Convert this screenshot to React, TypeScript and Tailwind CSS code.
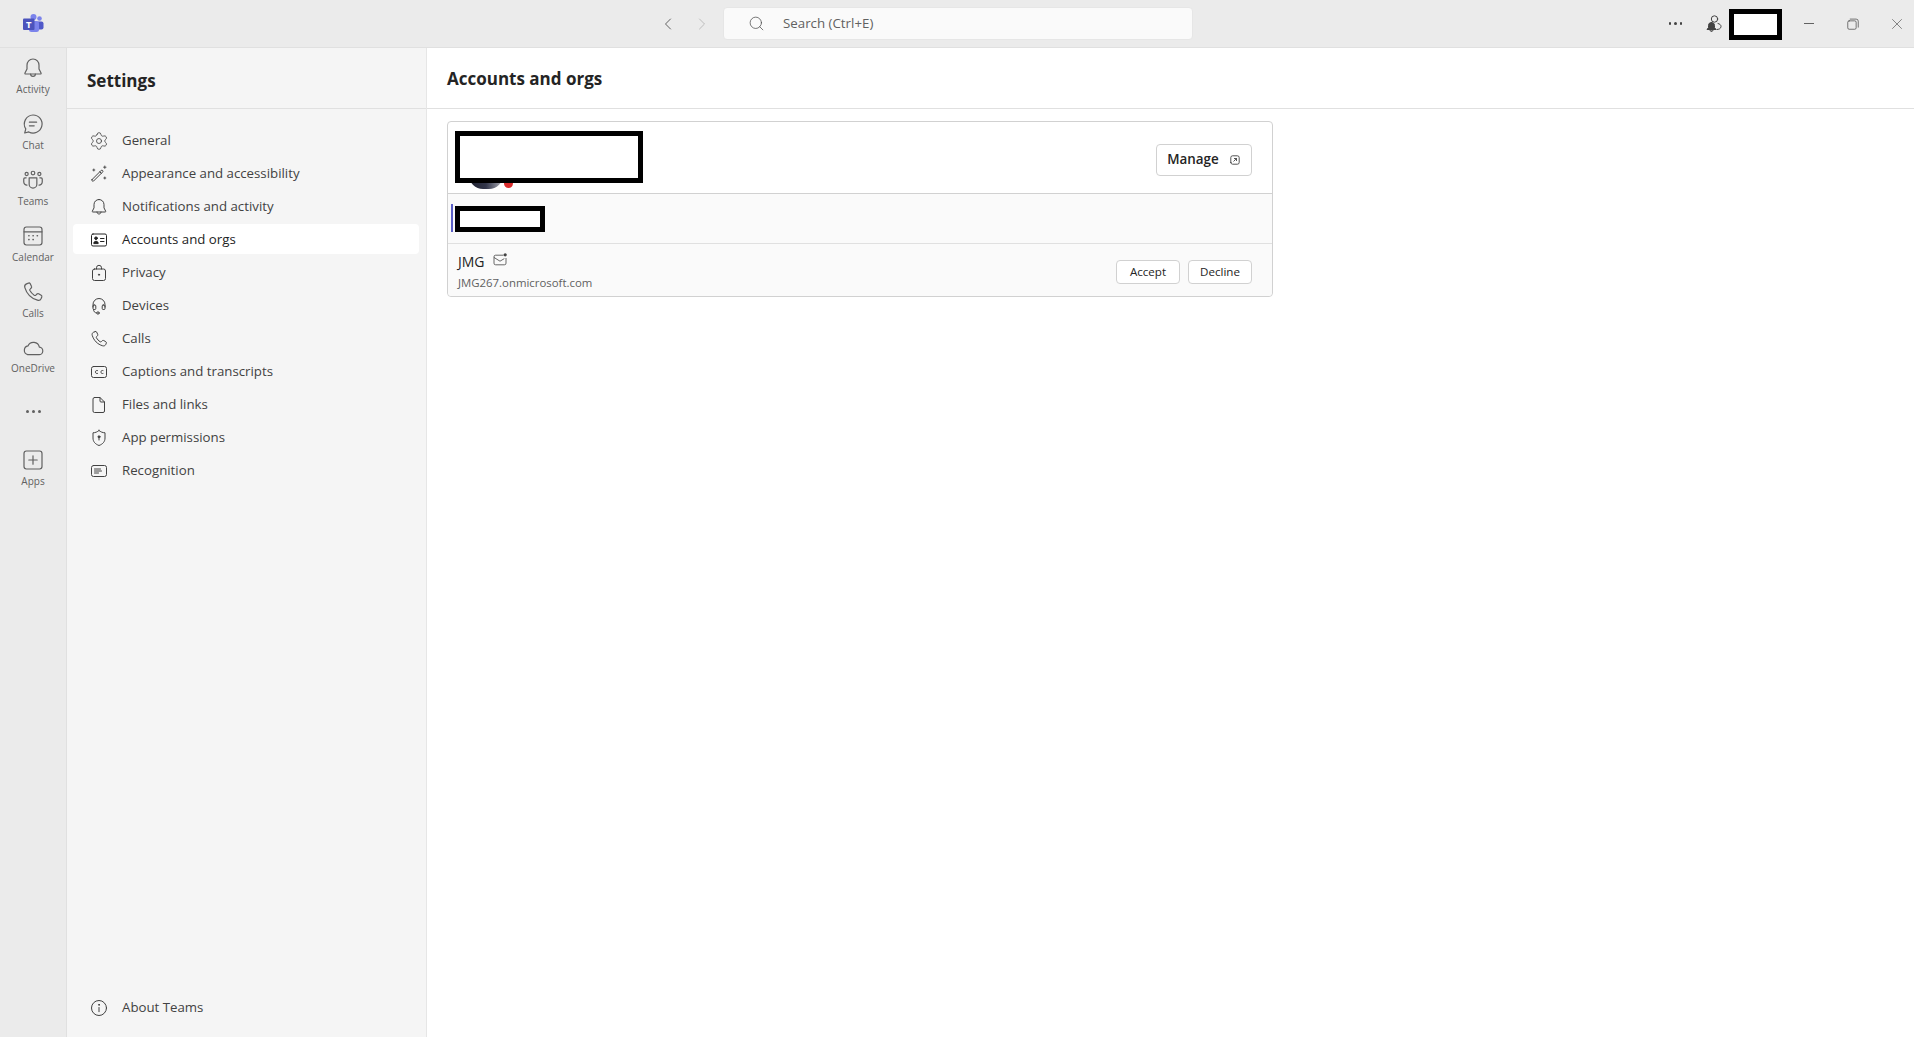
import type { ReactNode } from 'react';
import { ChevronLeft, ChevronRight, Search, Settings, X } from 'lucide-react';

const font = "font-['Open_Sans','Noto_Sans',sans-serif]";

function Ico({ size = 20, children, className = '' }: { size?: number; children: ReactNode; className?: string }) {
  return (
    <svg width={size} height={size} viewBox="0 0 20 20" fill="none" stroke="currentColor" strokeWidth="1" strokeLinecap="round" strokeLinejoin="round" className={className}>
      {children}
    </svg>
  );
}

const BellPath = (
  <>
    <path d="M10 2.500c-3 0-5 2.300-5 5.200v3.200L3.300 14.200c-.2.400 0 .8.500.8h12.400c.5 0 .7-.4.500-.8L15 10.900V7.700c0-2.900-2-5.200-5-5.200Z" />
    <path d="M8 15c0 1.200.9 2 2 2s2-.8 2-2" />
  </>
);
const PhonePath = <path d="M6.200 2.600 4.600 3.200C3.400 3.700 2.800 5 3.200 6.300c1.600 5.200 5.300 9 10.500 10.500 1.300.4 2.600-.2 3.100-1.400l.5-1.300c.2-.6 0-1.100-.5-1.400l-2.100-1.200c-.5-.3-1-.2-1.400.2l-.9.9c-.4.4-.9.4-1.400.1-1.500-1-2.700-2.300-3.600-3.900-.2-.4-.2-.9.2-1.200l.9-.9c.4-.4.500-.9.2-1.400L7.600 3c-.3-.5-.9-.7-1.400-.4Z" />;

const railItems: { label: string; icon: ReactNode; h: string; gap: string }[] = [
  { label: 'Activity', icon: <Ico size={24}>{BellPath}</Ico>, h: 'h-14', gap: 'mt-[2px]' },
  {
    label: 'Chat',
    icon: (
      <Ico size={24}>
        <path d="M10 2.500a7.500 7.500 0 1 1-3.500 14.100l-3.400.9.9-3.400A7.500 7.500 0 0 1 10 2.500Z" />
        <path d="M7 8.500h6M7 11.500h4" />
      </Ico>
    ),
    h: 'h-14',
    gap: 'mt-[2px]',
  },
  {
    label: 'Teams',
    icon: (
      <Ico size={24}>
        <circle cx="10" cy="4.200" r="1.500" />
        <circle cx="4.700" cy="5" r="1.300" />
        <circle cx="15.300" cy="5" r="1.300" />
        <path d="M6.800 8.200h6.400v5.300a3.200 3.200 0 0 1-6.400 0V8.200Z" />
        <path d="M4.300 8.200H3.200a.9.9 0 0 0-.9.9v2.600a2.600 2.600 0 0 0 2.700 2.500M15.700 8.200h1.100c.5 0 .9.400.9.900v2.600a2.600 2.600 0 0 1-2.700 2.500" />
      </Ico>
    ),
    h: 'h-14',
    gap: 'mt-[2px]',
  },
  {
    label: 'Calendar',
    icon: (
      <Ico size={24}>
        <rect x="2.500" y="2.500" width="15" height="15" rx="2" />
        <path d="M2.500 6.500h15" />
        <path d="M6.500 9.800h.2M10 9.800h.2M13.500 9.800h.2M6.500 13h.2M10 13h.2" strokeWidth="1.300" />
      </Ico>
    ),
    h: 'h-14',
    gap: 'mt-[2px]',
  },
  { label: 'Calls', icon: <Ico size={24}>{PhonePath}</Ico>, h: 'h-14', gap: 'mt-[2px]' },
  {
    label: 'OneDrive',
    icon: (
      <Ico size={24}>
        <path d="M5.500 15.500h9.300a3.100 3.100 0 0 0 .5-6.200 5 5 0 0 0-9.500-1A3.700 3.700 0 0 0 5.500 15.500Z" />
      </Ico>
    ),
    h: 'h-[52px]',
    gap: 'mt-[1px]',
  },
];

const navItems: { label: string; icon: ReactNode }[] = [
  { label: 'General', icon: <Settings size={20} strokeWidth={1} /> },
  {
    label: 'Appearance and accessibility',
    icon: (
      <Ico>
        <path d="M3 15.600 12.300 6.300a1.100 1.100 0 0 1 1.500 1.500L4.500 17.100a1.100 1.100 0 0 1-1.500-1.500ZM10.800 7.800l1.500 1.500" />
        <path d="M15.800 2v2.400M14.600 3.200H17M4.800 5v2M3.800 6h2M15.800 13v2M14.800 14h2" strokeWidth="0.9" />
      </Ico>
    ),
  },
  { label: 'Notifications and activity', icon: <Ico>{BellPath}</Ico> },
  {
    label: 'Accounts and orgs',
    icon: (
      <Ico>
        <rect x="2.500" y="4" width="15" height="12" rx="1.500" />
        <circle cx="7" cy="8.200" r="1.300" fill="currentColor" />
        <path d="M4.800 13.200c0-1.200.9-1.900 2.200-1.900s2.200.7 2.200 1.900Z" fill="currentColor" />
        <path d="M11.500 8.500h3.500M11.500 11.500h3.500" />
      </Ico>
    ),
  },
  {
    label: 'Privacy',
    icon: (
      <Ico>
        <rect x="3.500" y="6" width="13" height="11.500" rx="2" />
        <path d="M7.500 6V4.800a2.500 2.500 0 0 1 5 0V6" />
        <circle cx="10" cy="11.700" r="0.600" fill="currentColor" />
      </Ico>
    ),
  },
  {
    label: 'Devices',
    icon: (
      <Ico>
        <path d="M4 11V8.500a6 6 0 0 1 12 0V11" />
        <rect x="4" y="9" width="2.800" height="4.500" rx="1" />
        <rect x="13.200" y="9" width="2.800" height="4.500" rx="1" />
        <path d="M4.500 13.500c0 2 1.200 3.300 3.200 3.500" />
        <circle cx="9" cy="17" r="1.200" />
      </Ico>
    ),
  },
  { label: 'Calls', icon: <Ico>{PhonePath}</Ico> },
  {
    label: 'Captions and transcripts',
    icon: (
      <Ico>
        <rect x="2.500" y="4.500" width="15" height="11" rx="2" />
        <path d="M8.500 8.500a1.600 1.600 0 1 0 0 3M14 8.500a1.600 1.600 0 1 0 0 3" />
      </Ico>
    ),
  },
  {
    label: 'Files and links',
    icon: (
      <Ico>
        <path d="M5.500 2.500h5.500L15.500 7v9a1.500 1.500 0 0 1-1.500 1.500H5.500A1.500 1.500 0 0 1 4 16V4a1.500 1.500 0 0 1 1.500-1.500Z" />
        <path d="M11 2.500V6a1 1 0 0 0 1 1h3.500" />
      </Ico>
    ),
  },
  {
    label: 'App permissions',
    icon: (
      <Ico>
        <path d="M10 2.500c1.700 1.500 3.700 2.200 6 2.300V10c0 3.500-2 6-6 7.500C6 16 4 13.500 4 10V4.800c2.300-.1 4.300-.8 6-2.300Z" />
        <circle cx="10" cy="8.800" r="1" fill="currentColor" />
        <path d="M10 9.500v2.500" />
      </Ico>
    ),
  },
  {
    label: 'Recognition',
    icon: (
      <Ico>
        <rect x="2.500" y="4.500" width="15" height="11" rx="2" />
        <path d="M5.500 8h6M5.500 10h7M5.500 12h4" />
      </Ico>
    ),
  },
];

function TeamsLogo() {
  return (
    <svg width="24" height="24" viewBox="0 0 24 24">
      <circle cx="18.500" cy="6.500" r="2.300" fill="#7b83eb" />
      <rect x="15" y="9.500" width="7.500" height="8" rx="2" fill="#5059c9" />
      <circle cx="12.500" cy="5" r="3" fill="#7b83eb" />
      <rect x="8" y="9" width="10" height="11" rx="2.500" fill="#7b83eb" />
      <rect x="2" y="6.500" width="11.500" height="11.500" rx="1" fill="#4b53bc" />
      <text x="7.700" y="15.800" textAnchor="middle" fontSize="9.500" fontWeight="700" fill="#fff" fontFamily="Open Sans">T</text>
    </svg>
  );
}

function Redact({ className }: { className: string }) {
  return <div className={`absolute bg-white border-black ${className}`} />;
}

function TitleBar() {
  return (
    <header className="relative flex h-12 shrink-0 items-center border-b border-[#e0e0e0] bg-[#ebebeb]">
      <div className="flex w-[65px] justify-center"><TeamsLogo /></div>
      <div className="ml-[591px] flex w-[64px] justify-between pr-[8px] pl-[2px]">
        <ChevronLeft size={20} strokeWidth={1.2} className="text-[#616161]" />
        <ChevronRight size={20} strokeWidth={1.2} className="text-[#bdbdbd]" />
      </div>
      <div className="ml-[3px] flex h-[33px] w-[470px] items-center rounded-[4px] border border-[#e6e6e6] bg-[#fafafa] pl-[24px] text-[13.300px] text-[#616161]">
        <Search size={17} strokeWidth={1} className="mr-[18px] text-[#424242]" />
        Search (Ctrl+E)
      </div>
      <div className="ml-auto flex items-center text-[#424242]">
        <div className="mr-[22px] flex gap-[3px]">
          <span className="size-[2.500px] rounded-full bg-[#424242]" />
          <span className="size-[2.500px] rounded-full bg-[#424242]" />
          <span className="size-[2.500px] rounded-full bg-[#424242]" />
        </div>
        <Ico size={20} className="mr-[80px]">
          <circle cx="10.500" cy="5" r="3.200" />
          <path d="M14 9.500c2 .5 3 1.500 3 3 0 2-2 3-4 3" />
          <path d="M7.500 8.500c-2 0-3 1.200-3 3v2l-1.500 2h9l-1.500-2v-2c0-1.800-1-3-3-3Z" fill="currentColor" />
          <path d="M6 16.500a1.700 1.700 0 0 0 3 0" fill="currentColor" />
        </Ico>
        <span className="mr-[32px] h-px w-[10px] bg-[#616161]" />
        <Ico size={14} className="mr-[28px]">
          <rect x="2.500" y="5.500" width="12" height="12" rx="2" />
          <path d="M6 3h8.500a3 3 0 0 1 3 3v8.500" />
        </Ico>
        <X size={18} strokeWidth={1} className="mr-[8px] text-[#616161]" />
      </div>
      <Redact className="top-[9px] left-[1729px] h-[31px] w-[53px] border-[5px]" />
    </header>
  );
}

function Rail() {
  return (
    <nav className="flex w-[67px] shrink-0 flex-col items-center border-r border-[#e0e0e0] bg-[#ebebeb] pt-px text-[10px] text-[#616161]">
      {railItems.map((item) => (
        <div key={item.label} className={`flex w-full flex-col items-center pt-[7px] ${item.h}`}>
          {item.icon}
          <span className={`leading-[14px] ${item.gap}`}>{item.label}</span>
        </div>
      ))}
      <div className="mt-[18px] flex h-[24px] items-center gap-[3px]">
        <span className="size-[3px] rounded-full bg-[#616161]" />
        <span className="size-[3px] rounded-full bg-[#616161]" />
        <span className="size-[3px] rounded-full bg-[#616161]" />
      </div>
      <div className="mt-[25px] flex flex-col items-center">
        <Ico size={24}>
          <rect x="2.500" y="2.500" width="15" height="15" rx="2" />
          <path d="M10 6.500v7M6.500 10h7" />
        </Ico>
        <span className="mt-[2px] leading-[14px]">Apps</span>
      </div>
    </nav>
  );
}

function Sidebar() {
  return (
    <aside className="flex w-[360px] shrink-0 flex-col border-r border-[#e6e6e6] bg-[#f5f5f5]">
      <div className="flex h-[61px] shrink-0 items-center border-b border-[#e0e0e0] pt-[5px] pl-[20px] text-[17px] font-bold text-[#242424]">
        Settings
      </div>
      <div className="flex flex-1 flex-col pt-[16px] pr-[7px] pl-[6px] text-[13.250px] text-[#424242]">
        {navItems.map((item) => (
          <div
            key={item.label}
            className={`mb-[3px] flex h-[30px] items-center rounded-[4px] pt-px pl-[16px] ${item.label === 'Accounts and orgs' ? 'bg-white text-[#242424]' : ''}`}
          >
            <span className="w-[33px] shrink-0">{item.icon}</span>
            {item.label}
          </div>
        ))}
        <div className="mt-auto mb-[14px] flex h-[30px] items-center pl-[16px]">
          <span className="w-[33px] shrink-0">
            <Ico>
              <circle cx="10" cy="10" r="7.500" />
              <circle cx="10" cy="6.800" r="0.500" fill="currentColor" />
              <path d="M10 9.500v4.200" />
            </Ico>
          </span>
          About Teams
        </div>
      </div>
    </aside>
  );
}

function AccountCard() {
  return (
    <section className="relative ml-[20px] mt-[12px] w-[826px] rounded-[4px] border border-[#d1d1d1] text-[#242424]">
      <div className="flex h-[72px] items-center justify-end border-b border-[#d1d1d1] pt-[4px] pr-[20px]">
        <button className="flex h-[32px] w-[96px] items-center justify-center gap-[10px] rounded-[4px] border border-[#d1d1d1] bg-white text-[13.400px] font-semibold">
          Manage
          <Ico size={12} className="text-[#424242]">
            <path d="M3 14V6a3 3 0 0 1 3-3h8a3 3 0 0 1 3 3v8a3 3 0 0 1-3 3H6a3 3 0 0 1-3-3Z" strokeWidth="1.500" />
            <path d="M8 12l4.500-4.500M9 7.500h3.500V11" strokeWidth="1.500" />
          </Ico>
        </button>
      </div>
      <div className="h-[50px] border-b border-[#e0e0e0] bg-[#fafafa]" />
      <div className="flex h-[52px] items-center justify-between rounded-b-[4px] bg-[#fafafa] pt-[4px] pl-[10px] pr-[20px]">
        <div>
          <div className="flex items-center gap-[7px] text-[14px] leading-[20px]">
            JMG
            <Ico size={16} className="mb-[3px] text-[#424242]">
              <path d="M14 4H4.500A2 2 0 0 0 2.500 6v8a2 2 0 0 0 2 2h11a2 2 0 0 0 2-2V8" />
              <path d="M2.800 7 10 11.500 15 8.500" />
              <circle cx="16.500" cy="3.500" r="2" fill="currentColor" stroke="none" />
            </Ico>
          </div>
          <div className="pt-px text-[11.400px] leading-[20px] text-[#616161]">JMG267.onmicrosoft.com</div>
        </div>
        <div className="flex gap-[8px] text-[11.600px]">
          <button className="h-[24px] w-[64px] rounded-[4px] border border-[#d1d1d1] bg-white">Accept</button>
          <button className="h-[24px] w-[64px] rounded-[4px] border border-[#d1d1d1] bg-white">Decline</button>
        </div>
      </div>
      {/* avatar peeking out under the blacked-out name */}
      <div className="absolute top-[53px] left-[21px] h-[14px] w-[34px] overflow-hidden rounded-b-full bg-gradient-to-r from-[#1f2230] via-[#33364a] to-[#b5b5bb]" />
      <div className="absolute top-[57px] left-[56px] size-[9px] rounded-full bg-[#d92c2c]" />
      <Redact className="top-[9px] left-[7px] h-[52px] w-[188px] border-[5px]" />
      <div className="absolute top-[82px] left-[3px] h-[28px] w-[2px] bg-[#5b5fc7]" />
      <Redact className="top-[84px] left-[7px] h-[26px] w-[90px] border-[5px]" />
    </section>
  );
}

export default function App() {
  return (
    <div className={`flex h-[1037px] w-[1914px] flex-col overflow-hidden bg-white ${font}`}>
      <TitleBar />
      <div className="flex min-h-0 flex-1">
        <Rail />
        <Sidebar />
        <main className="flex-1">
          <div className="flex h-[61px] items-center border-b border-[#e0e0e0] pt-px pl-[20px] text-[17px] font-bold text-[#242424]">
            Accounts and orgs
          </div>
          <AccountCard />
        </main>
      </div>
    </div>
  );
}
